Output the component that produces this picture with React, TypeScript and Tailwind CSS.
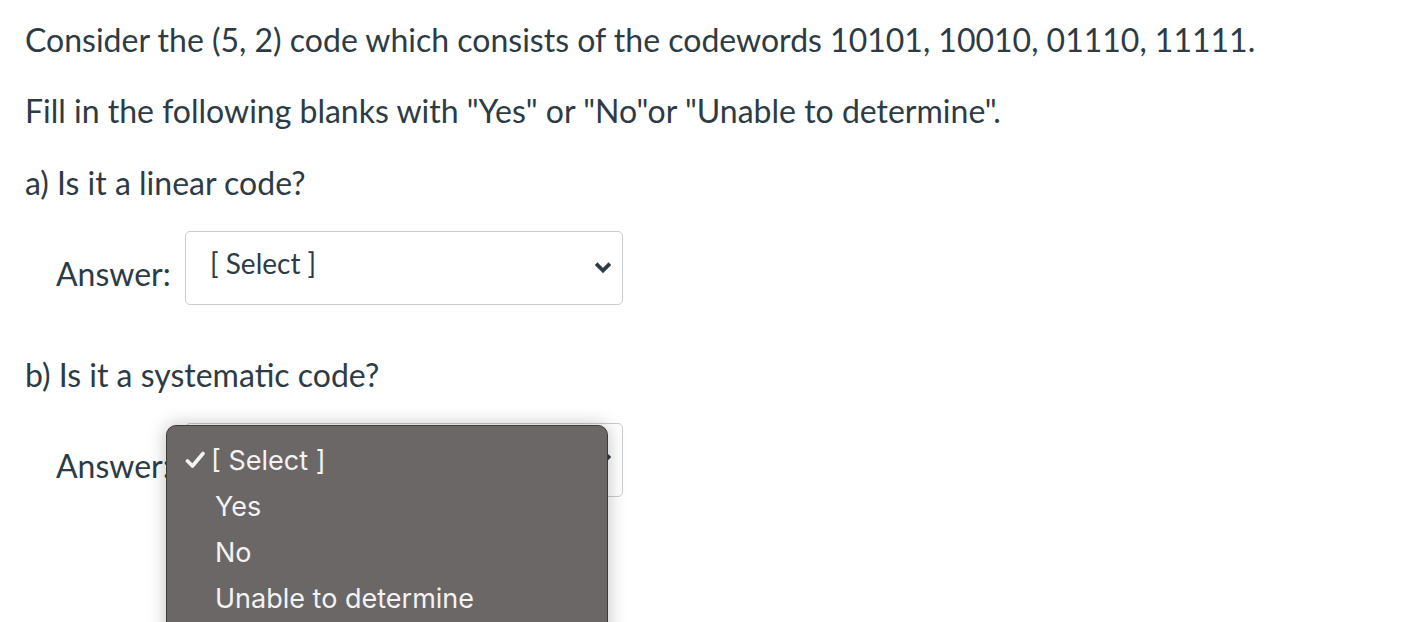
const Chevron = ({ className }: { className?: string }) => (
  <svg width="16" height="12" viewBox="0 0 16 12" className={className}>
    <path d="M2.5 3 L8 8.5 L13.5 3" fill="none" stroke="#2d3b45" strokeWidth="3.8" strokeLinecap="square" />
  </svg>
)

const Check = () => (
  <svg width="21" height="20" viewBox="0 0 21 20">
    <path d="M2.5 11 L7.5 16 L18 3.5" fill="none" stroke="#f4f4f4" strokeWidth="3.6" strokeLinecap="round" strokeLinejoin="round" />
  </svg>
)

const options = ['Yes', 'No', 'Unable to determine']

const SelectBox = () => (
  <div className="flex h-[74px] w-[438px] items-center justify-between rounded-[5px] border border-[#c7cdd1] bg-white pl-[24px] pr-[11px] text-[28px]">
    <span className="-mt-[10px]">[ Select ]</span>
    <Chevron />
  </div>
)

const Menu = () => (
  <div className="absolute left-[-19px] top-[2px] h-[240px] w-[442px] rounded-[10px] border border-[#3e3b3a] bg-[#6b6766] pt-[18px] shadow-[0_0_18px_rgba(0,0,0,0.25)] font-['Inter',sans-serif] text-[27px] text-[#f3f3f3]">
    <div className="flex h-[32px] items-center gap-[5px] pl-[18px]">
      <Check />
      <span>[ Select ]</span>
    </div>
    {options.map((option) => (
      <div key={option} className="mt-[14px] flex h-[32px] items-center pl-[48px]">
        {option}
      </div>
    ))}
  </div>
)

export default function App() {
  return (
    <div className="min-h-[622px] overflow-hidden bg-white px-[25px] pt-[18px] font-['Lato',sans-serif] text-[32px] leading-[43px] text-[#2d3b45]">
      <p>Consider the (5, 2) code which consists of the codewords 10101, 10010, 01110, 11111.</p>
      <p className="mt-[28px]">Fill in the following blanks with "Yes" or "No"or "Unable to determine".</p>
      <p className="mt-[29px]">a) Is it a linear code?</p>

      <div className="mt-[27px] flex items-center">
        <span className="w-[160px] pl-[31px] pt-[10px]">Answer:</span>
        <SelectBox />
      </div>

      <p className="mt-[48px]">b) Is it a systematic code?</p>

      <div className="mt-[27px] flex items-center">
        <span className="w-[160px] pl-[31px] pt-[10px]">Answer:</span>
        <div className="relative">
          <SelectBox />
          <Menu />
        </div>
      </div>
    </div>
  )
}
